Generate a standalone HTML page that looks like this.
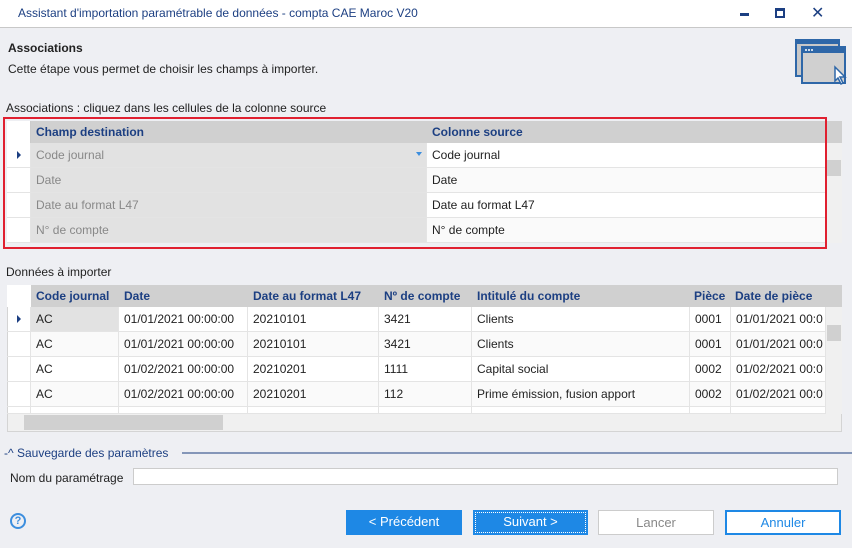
<!DOCTYPE html>
<html><head><meta charset="utf-8"><style>
*{margin:0;padding:0;box-sizing:border-box}
body{width:852px;height:548px;overflow:hidden;background:#eeeff3;font-family:"Liberation Sans",sans-serif;font-size:12px;color:#222;position:relative}
.a{position:absolute;white-space:nowrap}
.t{display:inline-block}
.hd{color:#1c3f82;font-weight:bold}
.cell{position:absolute;height:25px;line-height:25px;padding-left:5px;overflow:hidden;white-space:nowrap;border-right:1px solid #e4e4e4;border-bottom:1px solid #e4e4e4}
.btn{font-size:13px}
</style></head><body>
<div class="a" style="left:0;top:0;width:852px;height:28px;background:#fff;border-bottom:1px solid #c8c8c8"></div>
<div class="a" style="left:18px;top:6px;color:#1c3f82"><span class="t">Assistant d'importation paramétrable de données - compta CAE Maroc V20</span></div>
<div class="a" style="left:740px;top:13px;width:9px;height:3px;background:#1c3f82"></div>
<div class="a" style="left:775px;top:8px;width:10px;height:10px;border:2px solid #1c3f82;border-top-width:3px"></div>
<div class="a" style="left:811px;top:3px;color:#1c3f82;font-size:16px">✕</div>

<div class="a" style="left:8px;top:41px;font-weight:bold"><span class="t">Associations</span></div>
<div class="a" style="left:8px;top:62px"><span class="t">Cette étape vous permet de choisir les champs à importer.</span></div>
<svg class="a" style="left:795px;top:39px" width="56" height="46">
<rect x="1" y="1" width="43" height="36" fill="#c8c8c8" stroke="#2e67a8" stroke-width="2"/><rect x="1" y="1" width="43" height="4" fill="#2e67a8"/>
<rect x="7" y="8" width="43" height="36" fill="#d0d0d0" stroke="#2e67a8" stroke-width="2"/><rect x="7" y="8" width="43" height="6" fill="#2e67a8"/>
<circle cx="11" cy="11" r="1" fill="#fff"/><circle cx="14" cy="11" r="1" fill="#fff"/><circle cx="17" cy="11" r="1" fill="#fff"/>
<path d="M40 28 L40 42 L43 39 L46 45 L48 44 L45 38 L50 38 Z" fill="#fff" stroke="#2e67a8" stroke-width="1.5"/>
</svg>
<div class="a" style="left:6px;top:101px"><span class="t">Associations : cliquez dans les cellules de la colonne source</span></div>

<div class="a" style="left:7px;top:121px;width:835px;height:122px;background:#fff"></div>
<div class="a" style="left:7px;top:121px;width:835px;height:22px;background:#d0d0d0"></div>
<div class="a" style="left:7px;top:121px;width:24px;height:22px;background:#fff;border-right:1px solid #ccc"></div>
<div class="a hd" style="left:36px;top:125px"><span class="t">Champ destination</span></div>
<div class="a hd" style="left:432px;top:125px"><span class="t">Colonne source</span></div>
<div class="cell" style="left:7px;top:143px;width:24px;background:#fff"></div>
<div class="cell" style="left:7px;top:168px;width:24px;background:#fff"></div>
<div class="cell" style="left:7px;top:193px;width:24px;background:#fff"></div>
<div class="cell" style="left:7px;top:218px;width:24px;background:#fff"></div>
<div class="a" style="left:17px;top:151px;width:0;height:0;border-left:4px solid #1c3f82;border-top:4px solid transparent;border-bottom:4px solid transparent"></div>
<div class="cell" style="left:31px;top:143px;width:396px;background:#e2e2e2;color:#888"><span class="t">Code journal</span></div>
<div class="a" style="left:416px;top:152px;border-top:4px solid #3c8ede;border-left:3px solid transparent;border-right:3px solid transparent"></div>
<div class="cell" style="left:31px;top:168px;width:396px;background:#e2e2e2;color:#888"><span class="t">Date</span></div>
<div class="cell" style="left:31px;top:193px;width:396px;background:#e2e2e2;color:#888"><span class="t">Date au format L47</span></div>
<div class="cell" style="left:31px;top:218px;width:396px;background:#e2e2e2;color:#888"><span class="t">N° de compte</span></div>
<div class="cell" style="left:427px;top:143px;width:399px;background:#fff"><span class="t">Code journal</span></div>
<div class="cell" style="left:427px;top:168px;width:399px;background:#fafafa"><span class="t">Date</span></div>
<div class="cell" style="left:427px;top:193px;width:399px;background:#fff"><span class="t">Date au format L47</span></div>
<div class="cell" style="left:427px;top:218px;width:399px;background:#fafafa"><span class="t">N° de compte</span></div>
<div class="a" style="left:826px;top:143px;width:16px;height:100px;background:#f0f0f0"></div>
<div class="a" style="left:827px;top:160px;width:14px;height:16px;background:#d0d0d0"></div>
<div class="a" style="left:3px;top:117px;width:824px;height:132px;border:2px solid #e02030"></div>

<div class="a" style="left:6px;top:265px"><span class="t">Données à importer</span></div>
<div class="a" style="left:7px;top:285px;width:835px;height:147px;background:#fff;border:1px solid #d4d4d4"></div>
<div class="a" style="left:7px;top:285px;width:835px;height:22px;background:#d0d0d0"></div>
<div class="a" style="left:7px;top:285px;width:24px;height:22px;background:#fff"></div>
<div class="a hd" style="left:36px;top:289px"><span class="t">Code journal</span></div>
<div class="a hd" style="left:124px;top:289px"><span class="t">Date</span></div>
<div class="a hd" style="left:253px;top:289px"><span class="t">Date au format L47</span></div>
<div class="a hd" style="left:384px;top:289px"><span class="t">Nº de compte</span></div>
<div class="a hd" style="left:477px;top:289px"><span class="t">Intitulé du compte</span></div>
<div class="a hd" style="left:694px;top:289px"><span class="t">Pièce</span></div>
<div class="a hd" style="left:735px;top:289px;width:91px;overflow:hidden"><span class="t">Date de pièce</span></div>
<div id="rows"></div>
<script>
var d=[["AC","01/01/2021 00:00:00","20210101","3421","Clients","0001","01/01/2021 00:0"],["AC","01/01/2021 00:00:00","20210101","3421","Clients","0001","01/01/2021 00:0"],["AC","01/02/2021 00:00:00","20210201","1111","Capital social","0002","01/02/2021 00:0"],["AC","01/02/2021 00:00:00","20210201","112","Prime émission, fusion apport","0002","01/02/2021 00:0"]];
var xs=[31,119,248,379,472,690,731,826],h="";
for(var r=0;r<5;r++){var y=307+r*25;h+='<div class="cell" style="left:7px;top:'+y+'px;width:24px;height:'+(r==4?7:25)+'px"></div>';
for(var c=0;c<7;c++){var bg=(r==0&&c==0)?"#e2e2e2":(r%2?"#fafafa":"#fff");h+='<div class="cell" style="left:'+xs[c]+'px;top:'+y+'px;width:'+(xs[c+1]-xs[c])+'px;height:'+(r==4?7:25)+'px;background:'+bg+'"><span class="t">'+(r<4?d[r][c]:"")+'</span></div>';}}
document.getElementById("rows").innerHTML=h;
</script>
<div class="a" style="left:17px;top:315px;border-left:4px solid #1c3f82;border-top:4px solid transparent;border-bottom:4px solid transparent"></div>
<div class="a" style="left:826px;top:307px;width:16px;height:107px;background:#f0f0f0"></div>
<div class="a" style="left:827px;top:325px;width:14px;height:16px;background:#d0d0d0"></div>
<div class="a" style="left:8px;top:414px;width:833px;height:17px;background:#f0f0f0"></div>
<div class="a" style="left:24px;top:415px;width:199px;height:15px;background:#d0d0d0"></div>

<div class="a" style="left:4px;top:446px;color:#1c3f82"><span class="t">-^ Sauvegarde des paramètres</span></div>
<div class="a" style="left:182px;top:452px;width:670px;height:2px;background:#8496b8"></div>
<div class="a" style="left:10px;top:471px"><span class="t">Nom du paramétrage</span></div>
<div class="a" style="left:133px;top:468px;width:705px;height:17px;background:#fff;border:1px solid #ccc"></div>

<div class="a" style="left:10px;top:513px;width:16px;height:16px;border:2px solid #3c8ede;border-radius:50%;color:#3c8ede;font-size:11px;font-weight:bold;text-align:center;line-height:12px">?</div>
<div class="a btn" style="left:346px;top:510px;width:116px;height:25px;background:#1e88e5;color:#fff;text-align:center;line-height:24px">&lt; Précédent</div>
<div class="a btn" style="left:473px;top:510px;width:115px;height:25px;background:#1e88e5;color:#fff;text-align:center;line-height:20px;border:2px solid #1e88e5;outline:1px dotted #fff;outline-offset:-3px">Suivant &gt;</div>
<div class="a btn" style="left:598px;top:510px;width:116px;height:25px;background:#fff;color:#888;border:1px solid #ccc;text-align:center;line-height:23px">Lancer</div>
<div class="a btn" style="left:725px;top:510px;width:116px;height:25px;background:#fff;color:#1e88e5;border:2px solid #1e88e5;text-align:center;line-height:21px">Annuler</div>
</body></html>
